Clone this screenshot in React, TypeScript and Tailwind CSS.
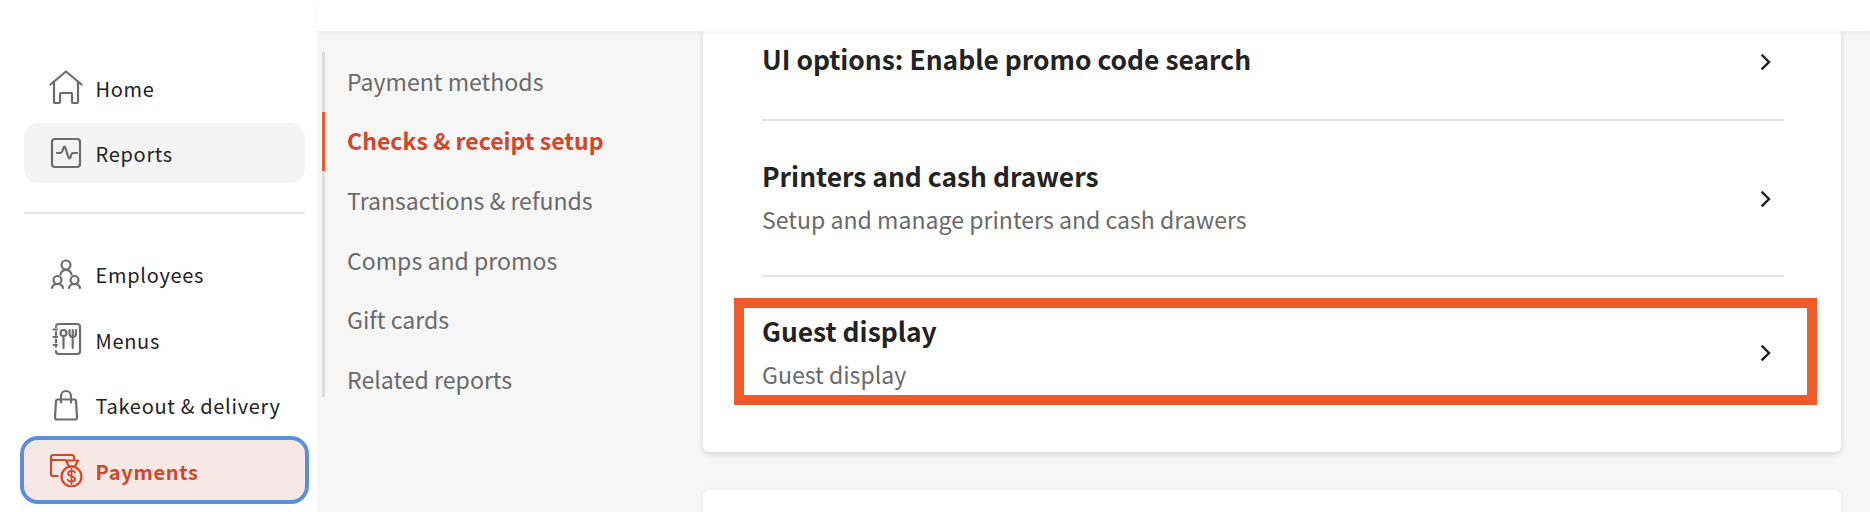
import React from "react";

const stroke = { fill: "none", stroke: "currentColor", strokeWidth: 2.2, strokeLinecap: "round" as const, strokeLinejoin: "round" as const };

function Home() {
  return (
    <svg width="34" height="36" viewBox="0 0 34 36" {...stroke}>
      <path d="M1.500 15.500 17 2.500l15.500 13" />
      <path d="M5 12.500v20a1.500 1.500 0 0 0 1.500 1.500h3.500a1 1 0 0 0 1-1v-8a1 1 0 0 1 1-1h10a1 1 0 0 1 1 1v8a1 1 0 0 0 1 1h3.500a1.500 1.500 0 0 0 1.500-1.500v-20" />
    </svg>
  );
}
function Reports() {
  return (
    <svg width="34" height="34" viewBox="0 0 34 34" {...stroke}>
      <rect x="3" y="3" width="28" height="28" rx="3" />
      <path d="M8 17h3.500c1 0 1.500-1 2-2.300.5-1.500 1-4 2-4s1.500 3 2.500 6.300c.7 2.500 1.500 5.500 2.500 5.500s1.300-2.500 1.800-4c.4-1 .8-1.500 1.700-1.500H28" />
    </svg>
  );
}
function Employees() {
  return (
    <svg width="34" height="34" viewBox="0 0 34 34" {...stroke}>
      <circle cx="17" cy="8" r="4.500" />
      <path d="M11.500 17.500c.6-2.500 2.800-4.500 5.500-4.500s4.900 2 5.500 4.500" />
      <circle cx="8.500" cy="23" r="4" />
      <path d="M3 31c.4-2.600 2.500-4 5.500-4s5.100 1.400 5.500 4" />
      <circle cx="25.500" cy="23" r="4" />
      <path d="M20 31c.4-2.600 2.500-4 5.500-4s5.100 1.400 5.500 4" />
    </svg>
  );
}
function Menus() {
  return (
    <svg width="34" height="34" viewBox="0 0 34 34" {...stroke}>
      <path d="M7 5V4.500A2.500 2.500 0 0 1 9.500 2h19A2.500 2.500 0 0 1 31 4.500v25a2.500 2.500 0 0 1-2.500 2.500h-19A2.500 2.500 0 0 1 7 29.500V29" />
      <path d="M7 10v3M7 17.500v3M7 25v0" />
      <path d="M4.500 7.500H8M4.500 15H8M4.500 23H8" />
      <circle cx="14.500" cy="11" r="3" />
      <path d="M14.500 14v12" />
      <path d="M20.500 8v4a3.200 3.200 0 0 0 6.400 0V8M23.700 8v18" />
    </svg>
  );
}
function Bag() {
  return (
    <svg width="34" height="34" viewBox="0 0 34 34" {...stroke}>
      <path d="M8.500 11.500h17a1.500 1.500 0 0 1 1.500 1.500l1 16.500a2 2 0 0 1-2 2H8a2 2 0 0 1-2-2l1-16.500a1.500 1.500 0 0 1 1.500-1.500Z" />
      <path d="M12 14.500V8a5 5 0 0 1 10 0v6.500" />
    </svg>
  );
}
function PaymentsIcon() {
  return (
    <svg width="34" height="34" viewBox="0 0 34 34" {...stroke}>
      <path d="M8.500 23H4a2 2 0 0 1-2-2V4a2 2 0 0 1 2-2h19a2 2 0 0 1 2 2v2" />
      <path d="M2 7h14" />
      <path d="M17 7.500h12l-3 6h-6Z" />
      <circle cx="22.500" cy="23.500" r="10" />
      <path d="M26 19.500c-.6-1.100-1.900-1.700-3.500-1.700-2 0-3.400 1-3.400 2.600 0 3.700 7.100 2 7.100 5.700 0 1.600-1.500 2.600-3.700 2.600-1.700 0-3.100-.7-3.700-1.900M22.500 16v15" strokeWidth="1.800" />
    </svg>
  );
}
function Chevron() {
  return (
    <svg width="12" height="18" viewBox="0 0 12 18" className="shrink-0 text-[#1f1f1f]" fill="none" stroke="currentColor" strokeWidth="2.400" strokeLinecap="square" strokeLinejoin="miter">
      <path d="M2.500 2.500 9 9l-6.500 6.500" />
    </svg>
  );
}

const font = "font-['Noto_Sans_CJK_SC','Noto_Sans',sans-serif]";

function NavItem({ icon, label, className = "" }: { icon: React.ReactNode; label: string; className?: string }) {
  return (
    <div className={`flex h-[60px] items-center rounded-[14px] pl-[25px] ${className}`}>
      <span className="flex w-[34px] shrink-0 items-center justify-center text-[#6c6c6c]">{icon}</span>
      <span className="relative top-[1.500px] ml-[12.500px] text-[20px] leading-[28px] tracking-[0.7px] text-[#232323]">{label}</span>
    </div>
  );
}

function Row({ title, sub, className, textClass }: { title: string; sub: string; className: string; textClass: string }) {
  return (
    <div className={`flex items-center pt-[2px] ${className}`}>
      <div className={`min-w-0 flex-1 ${textClass}`}>
        <div className="text-[26.400px] font-semibold leading-[36px] text-[#232323]">{title}</div>
        <div className="mt-[9px] text-[23.100px] leading-[32px] text-[#6a6a6a]">{sub}</div>
      </div>
      <Chevron />
    </div>
  );
}

export default function App() {
  const sub = ["Payment methods", "Checks & receipt setup", "Transactions & refunds", "Comps and promos", "Gift cards", "Related reports"];
  return (
    <div className={`flex h-[512px] w-[1870px] overflow-hidden bg-white ${font}`}>
      <aside className="w-[317px] shrink-0 pl-[24px] pr-[12px] pt-[57px]">
        <div className="flex flex-col gap-[5.500px]">
          <NavItem icon={<Home />} label="Home" />
          <NavItem icon={<Reports />} label="Reports" className="bg-[#f4f4f4]" />
        </div>
        <div className="mb-[30px] mt-[29px] h-[2px] bg-[#e4e4e4]" />
        <div className="flex flex-col gap-[5.500px]">
          <NavItem icon={<Employees />} label="Employees" />
          <NavItem icon={<Menus />} label="Menus" />
          <NavItem icon={<Bag />} label="Takeout & delivery" />
          <div className="rounded-[14px] outline-[4px] outline-[#5d8ed8]">
            <div className="flex h-[60px] items-center rounded-[14px] bg-[#f8e8e5] pl-[25px]">
              <span className="flex w-[34px] shrink-0 items-center justify-center text-[#d2462a]"><PaymentsIcon /></span>
              <span className="relative top-[1.500px] ml-[12.500px] text-[20px] font-bold leading-[28px] tracking-[0.7px] text-[#d2462a]">Payments</span>
            </div>
          </div>
        </div>
      </aside>
      <div className="flex min-w-0 flex-1 flex-col">
        <div className="relative z-10 h-[31px] shrink-0 bg-white shadow-[0_2px_6px_rgba(0,0,0,0.05)]" />
        <div className="flex flex-1 overflow-hidden bg-[#f6f6f6]">
          <nav className="w-[386px] shrink-0 pl-[5px] pt-[21px]">
            <div className="h-[345px] w-fit border-l-[3px] border-[#dedede]">
              {sub.map((s) => {
                const active = s === "Checks & receipt setup";
                return (
                  <div key={s} className={`-ml-[3px] flex h-[59.600px] w-[320px] items-center border-l-[3px] pl-[22px] ${active ? "border-[#ee5b2a]" : "border-transparent"}`}>
                    <span className={`relative -top-[1px] text-[23.100px] leading-[32px] ${active ? "font-bold text-[#d2462a]" : "text-[#6a6a6a]"}`}>{s}</span>
                  </div>
                );
              })}
            </div>
          </nav>
          <main className="flex w-[1138px] shrink-0 flex-col gap-[38px]">
            <section className="h-[421px] shrink-0 rounded-b-[6px] bg-white shadow-[0_2px_6px_rgba(0,0,0,0.14)]">
              <div className="ml-[59px] mr-[57px] flex h-[90px] items-center border-b-[2px] border-[#e4e4e4] pb-[26px] pr-[12px]">
                <div className="mb-[6px] flex-1 text-[26.400px] font-semibold leading-[36px] text-[#232323]">UI options: Enable promo code search</div>
                <Chevron />
              </div>
              <Row title="Printers and cash drawers" sub="Setup and manage printers and cash drawers" textClass="pb-[5px]" className="ml-[59px] mr-[57px] h-[156px] border-b-[2px] border-[#e4e4e4] pr-[12px]" />
              <div className="ml-[31px] mr-[24px] mt-[21px] box-border h-[107px] border-[10px] border-[#ee5b2a] pl-[18px] pr-[35px]">
                <Row title="Guest display" sub="Guest display" textClass="pb-[3px]" className="h-[87px]" />
              </div>
            </section>
            <section className="h-[60px] shrink-0 rounded-t-[6px] bg-white shadow-[0_0_4px_rgba(0,0,0,0.08)]" />
          </main>
        </div>
      </div>
    </div>
  );
}
